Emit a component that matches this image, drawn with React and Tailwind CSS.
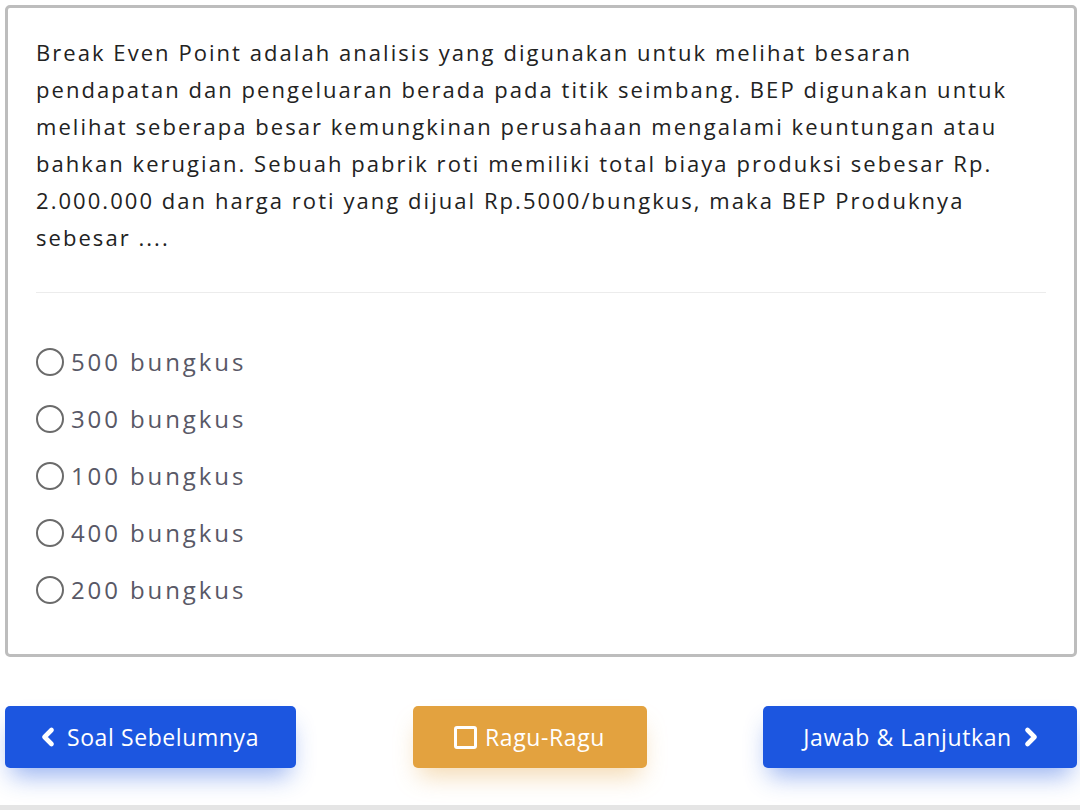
import React from 'react';
import { ChevronLeft, ChevronRight } from 'lucide-react';

const OPTIONS = ['500 bungkus', '300 bungkus', '100 bungkus', '400 bungkus', '200 bungkus'];

// line breaks follow the original card width
const QUESTION_LINES = [
    'Break Even Point adalah analisis yang digunakan untuk melihat besaran',
    'pendapatan dan pengeluaran berada pada titik seimbang. BEP digunakan untuk',
    'melihat seberapa besar kemungkinan perusahaan mengalami keuntungan atau',
    'bahkan kerugian. Sebuah pabrik roti memiliki total biaya produksi sebesar Rp.',
    '2.000.000 dan harga roti yang dijual Rp.5000/bungkus, maka BEP Produknya',
    'sebesar ....',
];

export default function App() {
    return (
        <div className="min-h-[810px] bg-white pl-[5px] pr-[3px] pt-[5px] font-['Open_Sans',_'Noto_Sans',_sans-serif] overflow-hidden">
            {/* Question card */}
            <div className="h-[652px] rounded-[5px] border-[3px] border-[#bdbdbd] px-[28px] pt-[26px]">
                <p className="text-[22px] leading-[37px] tracking-[2.05px] text-[#222] whitespace-nowrap">
                    {QUESTION_LINES.map((line) => (
                        <span key={line} className="block">{line}</span>
                    ))}
                </p>
                <div className="mt-[36px] h-px bg-[#ececec]" />

                <div className="mt-[55px] flex flex-col gap-[29px]">
                    {OPTIONS.map((opt) => (
                        <label key={opt} className="flex items-center gap-[7px] cursor-pointer">
                            <span className="h-[28px] w-[28px] rounded-full border-2 border-[#6b6b6b] bg-white" />
                            <span className="text-[24px] leading-[28px] tracking-[2.9px] text-[#585866]">{opt}</span>
                        </label>
                    ))}
                </div>
            </div>

            {/* Navigation buttons */}
            <div className="mt-[49px] flex items-center justify-between">
                <button className="flex h-[62px] w-[291px] items-center justify-center gap-[5px] rounded-[5px] bg-[#1c56e0] text-[23px] tracking-[0.6px] text-white shadow-[0_14px_24px_-6px_rgba(28,86,224,0.45)]">
                    <ChevronLeft className="-ml-2 h-[28px] w-[28px]" strokeWidth={4} />
                    Soal Sebelumnya
                </button>
                <button className="flex h-[62px] w-[234px] items-center justify-center gap-2 rounded-[5px] bg-[#e3a23f] text-[23px] tracking-[0.6px] text-white shadow-[0_14px_24px_-6px_rgba(227,162,63,0.4)]">
                    <span className="h-[23px] w-[23px] rounded-[3px] border-[3px] border-white" />
                    Ragu-Ragu
                </button>
                <button className="flex h-[62px] w-[314px] items-center justify-center gap-[5px] rounded-[5px] bg-[#1c56e0] text-[23px] tracking-[0.6px] text-white shadow-[0_14px_24px_-6px_rgba(28,86,224,0.45)]">
                    Jawab &amp; Lanjutkan
                    <ChevronRight className="-mr-2 h-[28px] w-[28px]" strokeWidth={4} />
                </button>
            </div>

            <div className="mt-[37px] -ml-[5px] -mr-[3px] h-[6px] bg-[#e5e5e5]" />
        </div>
    );
}
